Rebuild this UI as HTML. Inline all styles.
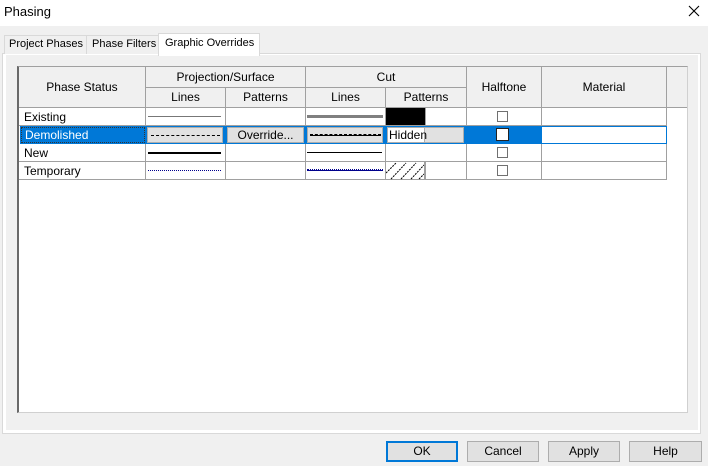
<!DOCTYPE html>
<html><head><style>
*{box-sizing:border-box;margin:0;padding:0}
body{width:708px;height:466px;background:#f0f0f0;font-family:"Liberation Sans",sans-serif;font-size:12px;color:#000;position:relative;overflow:hidden}
.a{position:absolute}
.t{position:absolute;white-space:nowrap}
.hd{position:absolute;background:#f0f0f0;border-right:1px solid #a0a0a0;border-bottom:1px solid #a0a0a0;text-align:center}
.c{position:absolute;border-right:1px solid #a0a0a0;border-bottom:1px solid #a0a0a0;background:#fff}
.btn{position:absolute;background:#e1e1e1;border:1px solid #adadad;text-align:center;line-height:19px;font-size:12px}
.cb{position:absolute;width:11px;height:11px;border:1px solid #707070;background:#fff}
</style></head><body>
<div class="a" style="left:0;top:0;width:708px;height:26px;background:#fff"></div>
<div class="t" style="left:4px;top:4px;font-size:13px">Phasing</div>
<svg class="a" style="left:688px;top:5px" width="12" height="12"><path d="M1 1L11 11M11 1L1 11" stroke="#000" stroke-width="1.1"/></svg>

<!-- tabs -->
<div class="a" style="left:2px;top:53px;width:699px;height:381px;border:1px solid #d9d9d9;background:#fff"></div>
<div class="a" style="left:6px;top:55px;width:692px;height:375px;background:#f0f0f0"></div>
<div class="a" style="left:4px;top:35px;width:83px;height:19px;border:1px solid #d9d9d9;border-bottom:none;background:#f0f0f0"></div>
<div class="t" style="left:9px;top:38px;font-size:11px">Project Phases</div>
<div class="a" style="left:86px;top:35px;width:73px;height:19px;border:1px solid #d9d9d9;border-bottom:none;background:#f0f0f0"></div>
<div class="t" style="left:92px;top:38px;font-size:11px">Phase Filters</div>
<div class="a" style="left:158px;top:33px;width:102px;height:23px;border:1px solid #d9d9d9;border-bottom:none;background:#fff"></div>
<div class="t" style="left:165px;top:37px;font-size:11px">Graphic Overrides</div>

<!-- grid -->
<div class="a" style="left:17px;top:66px;width:671px;height:347px;background:#fff;border-left:2px solid #696969;border-top:1px solid #a0a0a0;border-right:1px solid #d0d0d0;border-bottom:1px solid #d0d0d0"></div>
<div class="hd" style="left:19px;top:67px;width:127px;height:41px;line-height:40px">Phase Status</div>
<div class="hd" style="left:146px;top:67px;width:160px;height:21px;line-height:20px">Projection/Surface</div>
<div class="hd" style="left:146px;top:88px;width:80px;height:20px;line-height:19px">Lines</div>
<div class="hd" style="left:226px;top:88px;width:80px;height:20px;line-height:19px">Patterns</div>
<div class="hd" style="left:306px;top:67px;width:161px;height:21px;line-height:20px">Cut</div>
<div class="hd" style="left:306px;top:88px;width:80px;height:20px;line-height:19px">Lines</div>
<div class="hd" style="left:386px;top:88px;width:81px;height:20px;line-height:19px">Patterns</div>
<div class="hd" style="left:467px;top:67px;width:75px;height:41px;line-height:40px">Halftone</div>
<div class="hd" style="left:542px;top:67px;width:125px;height:41px;line-height:40px">Material</div>
<div class="hd" style="left:667px;top:67px;width:20px;height:41px;border-right:none"></div>

<!-- Existing -->
<div class="c" style="left:19px;top:108px;width:127px;height:18px"></div><div class="t" style="left:24px;top:110px">Existing</div>
<div class="c" style="left:146px;top:108px;width:80px;height:18px"></div><div class="a" style="left:148px;top:116px;width:73px;height:1px;background:#777"></div>
<div class="c" style="left:226px;top:108px;width:80px;height:18px"></div>
<div class="c" style="left:306px;top:108px;width:80px;height:18px"></div><div class="a" style="left:307px;top:115px;width:76px;height:3px;background:#808080"></div>
<div class="c" style="left:386px;top:108px;width:81px;height:18px"></div><div class="a" style="left:386px;top:108px;width:39px;height:17px;background:#000"></div><div class="a" style="left:425px;top:108px;width:1px;height:17px;background:#a0a0a0"></div>
<div class="c" style="left:467px;top:108px;width:75px;height:18px"></div><div class="cb" style="left:497px;top:111px"></div>
<div class="c" style="left:542px;top:108px;width:125px;height:18px"></div>
<!-- Demolished -->
<div class="a" style="left:20px;top:126px;width:647px;height:18px;background:#0078d7"></div>
<div class="a" style="left:21px;top:127px;width:124px;height:16px;border:1px dotted #333"></div>
<div class="t" style="left:25px;top:128px;color:#fff">Demolished</div>
<div class="btn" style="left:147px;top:127px;width:76px;height:16px"></div><div class="a" style="left:151px;top:135px;width:69px;border-top:1px dashed #000"></div>
<div class="btn" style="left:227px;top:127px;width:77px;height:16px;line-height:14px">Override...</div>
<div class="btn" style="left:307px;top:127px;width:76px;height:16px"></div><div class="a" style="left:310px;top:134px;width:71px;border-top:1px dashed #000"></div><div class="a" style="left:310px;top:135px;width:71px;height:1px;background:#000"></div>
<div class="btn" style="left:387px;top:127px;width:77px;height:16px"></div><div class="a" style="left:387px;top:127px;width:38px;height:16px;background:#fff;border:1px solid #adadad"></div><div class="t" style="left:389px;top:128px">Hidden</div>
<div class="cb" style="left:496px;top:128px;width:13px;height:13px;border-color:#222"></div>
<div class="a" style="left:542px;top:127px;width:124px;height:16px;background:#fff"></div>
<!-- New -->
<div class="c" style="left:19px;top:144px;width:127px;height:18px"></div><div class="t" style="left:24px;top:146px">New</div>
<div class="c" style="left:146px;top:144px;width:80px;height:18px"></div><div class="a" style="left:148px;top:152px;width:73px;height:2px;background:#000"></div>
<div class="c" style="left:226px;top:144px;width:80px;height:18px"></div>
<div class="c" style="left:306px;top:144px;width:80px;height:18px"></div><div class="a" style="left:307px;top:152px;width:75px;height:1px;background:#000"></div>
<div class="c" style="left:386px;top:144px;width:81px;height:18px"></div>
<div class="c" style="left:467px;top:144px;width:75px;height:18px"></div><div class="cb" style="left:497px;top:147px"></div>
<div class="c" style="left:542px;top:144px;width:125px;height:18px"></div>
<!-- Temporary -->
<div class="c" style="left:19px;top:162px;width:127px;height:18px"></div><div class="t" style="left:24px;top:164px">Temporary</div>
<div class="c" style="left:146px;top:162px;width:80px;height:18px"></div><div class="a" style="left:148px;top:170px;width:73px;border-top:1px dotted #00008b"></div>
<div class="c" style="left:226px;top:162px;width:80px;height:18px"></div>
<div class="c" style="left:306px;top:162px;width:80px;height:18px"></div><div class="a" style="left:307px;top:169px;width:76px;border-top:1px dotted #00008b"></div><div class="a" style="left:307px;top:170px;width:76px;height:1px;background:#00008b"></div>
<div class="c" style="left:386px;top:162px;width:81px;height:18px"></div>
<svg class="a" style="left:386px;top:162px" width="40" height="18"><path d="M0 11L10 1M5 17L20 1M15 17L30 1M25 17L38 3M33 17L38 12" stroke="#000" stroke-dasharray="2 1"/><rect x="38" y="0" width="2" height="18" fill="#a0a0a0"/></svg>
<div class="c" style="left:467px;top:162px;width:75px;height:18px"></div><div class="cb" style="left:497px;top:165px"></div>
<div class="c" style="left:542px;top:162px;width:125px;height:18px"></div>

<!-- buttons -->
<div class="btn" style="left:386px;top:441px;width:72px;height:21px;border:2px solid #0078d7;line-height:17px">OK</div>
<div class="btn" style="left:467px;top:441px;width:72px;height:21px">Cancel</div>
<div class="btn" style="left:548px;top:441px;width:72px;height:21px">Apply</div>
<div class="btn" style="left:629px;top:441px;width:73px;height:21px">Help</div>
</body></html>
